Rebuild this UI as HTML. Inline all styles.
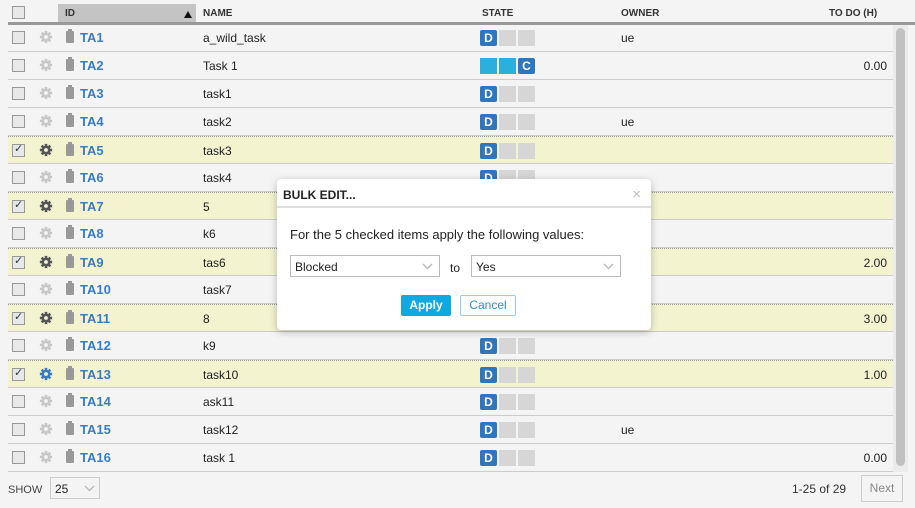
<!DOCTYPE html><html><head><style>
*{margin:0;padding:0;box-sizing:border-box}
body{width:915px;height:508px;background:#f4f4f4;font-family:"Liberation Sans",sans-serif;font-size:12px;color:#222;position:relative;overflow:hidden}
.a{position:absolute}
.hd{font-size:10px;font-weight:bold;color:#333;top:8px}
.row{position:absolute;left:8px;width:885px;height:28px;border-bottom:1px solid #ccc}
.sel{background:#f3f3d0;border-top:1px dotted #999}
.cb{position:absolute;left:4px;top:7px;width:13px;height:13px;border:1px solid #999;background:#e8e8e8}
.cb.on::after{content:"✓";position:absolute;left:1px;top:-3px;font-size:11px;color:#335}
.g{position:absolute;left:31px;top:6px}
.clip{position:absolute;left:58px;top:7px;width:8px;height:12px;background:#999;border-radius:1px}
.clip::before{content:"";position:absolute;left:2px;top:-2px;width:4px;height:3px;background:#999}
.id{position:absolute;left:72px;top:6px;color:#3a7cc4;font-weight:bold;font-size:13px}
.nm{position:absolute;left:195px;top:7px}
.st{position:absolute;left:472px;top:6px;height:16px;width:56px}
.b{position:absolute;top:0;width:17px;height:16px}
.ow{position:absolute;left:613px;top:7px}
.td{position:absolute;right:6px;top:7px}
</style></head><body>
<div class="a" style="left:12px;top:6px;width:13px;height:13px;border:1px solid #999;background:#e8e8e8"></div>
<div class="a" style="left:58px;top:4px;width:138px;height:19px;background:#c4c4c4"></div>
<div class="a hd" style="left:65px">ID</div>
<div class="a" style="left:184px;top:11px;width:0;height:0;border-left:4px solid transparent;border-right:4px solid transparent;border-bottom:7px solid #111"></div>
<div class="a hd" style="left:203px">NAME</div>
<div class="a hd" style="left:482px">STATE</div>
<div class="a hd" style="left:621px">OWNER</div>
<div class="a hd" style="left:829px">TO DO (H)</div>
<div class="a" style="left:8px;top:22px;width:907px;height:3px;background:#999"></div>
<div class="a" style="left:893px;top:25px;width:15px;height:447px;background:#ebebeb"></div>
<div class="a" style="left:896px;top:28px;width:9px;height:438px;background:#c1c1c1;border-radius:5px"></div>
<div id="rows"></div>
<div class="a" style="left:8px;top:484px;font-size:11px;color:#444">SHOW</div>
<div class="a" style="left:50px;top:477px;width:50px;height:22px;border:1px solid #ccc;background:#f4f4f4"><span style="position:absolute;left:4px;top:4px">25</span><svg class="a" style="left:33px;top:7px" width="11" height="7"><path d="M1 1l4.5 4.5L10 1" stroke="#bbb" stroke-width="1.5" fill="none"/></svg></div>
<div class="a" style="left:792px;top:482px;color:#333">1-25 of 29</div>
<div class="a" style="left:861px;top:475px;width:42px;height:27px;border:1px solid #ccc;color:#888;text-align:center;line-height:25px">Next</div>
<div class="a" style="left:277px;top:179px;width:374px;height:151px;background:#fff;border-radius:4px;box-shadow:0 2px 8px rgba(0,0,0,.25)">
<div class="a" style="left:6px;top:9px;font-weight:bold;font-size:12px;color:#222">BULK EDIT...</div>
<div class="a" style="right:10px;top:7px;color:#bbb;font-size:15px">×</div>
<div class="a" style="left:0;top:27px;width:374px;height:2px;background:#ddd"></div>
<div class="a" style="left:13px;top:48px;font-size:13px;color:#222">For the 5 checked items apply the following values:</div>
<div class="a" style="left:13px;top:76px;width:150px;height:22px;border:1px solid #bbb"><span style="position:absolute;left:4px;top:4px">Blocked</span><svg class="a" style="left:131px;top:7px" width="11" height="7"><path d="M1 1l4.5 4.5L10 1" stroke="#bbb" stroke-width="1.5" fill="none"/></svg></div>
<div class="a" style="left:173px;top:82px">to</div>
<div class="a" style="left:194px;top:76px;width:150px;height:22px;border:1px solid #bbb"><span style="position:absolute;left:4px;top:4px">Yes</span><svg class="a" style="left:131px;top:7px" width="11" height="7"><path d="M1 1l4.5 4.5L10 1" stroke="#bbb" stroke-width="1.5" fill="none"/></svg></div>
<div class="a" style="left:124px;top:116px;width:50px;height:21px;background:#0fa8e0;color:#fff;font-weight:bold;text-align:center;line-height:21px;border-radius:2px">Apply</div>
<div class="a" style="left:183px;top:116px;width:56px;height:21px;border:1px solid #8fd0ef;color:#2a8fc8;text-align:center;line-height:19px;border-radius:2px">Cancel</div>
</div>
<script>
var d=[["a_wild_task","D","ue",""],["Task 1","C","","0.00"],["task1","D","",""],["task2","D","ue",""],["task3","D","","",1],["task4","D","",""],["5","D","","",1],["k6","D","",""],["tas6","D","","2.00",1],["task7","D","",""],["8","D","","3.00",1],["k9","D","",""],["task10","D","","1.00",2],["ask11","D","",""],["task12","D","ue",""],["task 1","D","","0.00"]];
var h="";d.forEach(function(r,i){var t=24+28*i;var s=r[4];var gc=s==2?"#3a7cc4":s?"#555":"#c8c8c8";
var st=r[1]=="D"?'<div class="b" style="left:0;background:#2e77c0;border-radius:2px;color:#fff;font-weight:bold;text-align:center;line-height:16px">D</div><div class="b" style="left:19px;background:#d6d6d6"></div><div class="b" style="left:38px;background:#d6d6d6"></div>':'<div class="b" style="left:0;background:#2bb0dd"></div><div class="b" style="left:19px;background:#2bb0dd"></div><div class="b" style="left:38px;background:#2e77c0;border-radius:2px;color:#fff;font-weight:bold;text-align:center;line-height:16px">C</div>';
h+='<div class="row'+(s?' sel':'')+'" style="top:'+t+'px"><div class="cb'+(s?' on':'')+'"></div><svg class="g" width="14" height="14" viewBox="0 0 16 16"><g fill="'+gc+'"><circle cx="8" cy="8" r="5"/><rect x="6.5" y="1" width="3" height="14"/><rect x="1" y="6.5" width="14" height="3"/><rect x="6.5" y="1" width="3" height="14" transform="rotate(45 8 8)"/><rect x="6.5" y="1" width="3" height="14" transform="rotate(-45 8 8)"/></g><circle cx="8" cy="8" r="2.2" fill="'+(s?'#f3f3d0':'#f4f4f4')+'"/></svg><div class="clip"></div><div class="id">TA'+(i+1)+'</div><div class="nm">'+r[0]+'</div><div class="st">'+st+'</div><div class="ow">'+r[2]+'</div><div class="td">'+r[3]+'</div></div>';});
document.getElementById("rows").innerHTML=h;
</script>
</body></html>
